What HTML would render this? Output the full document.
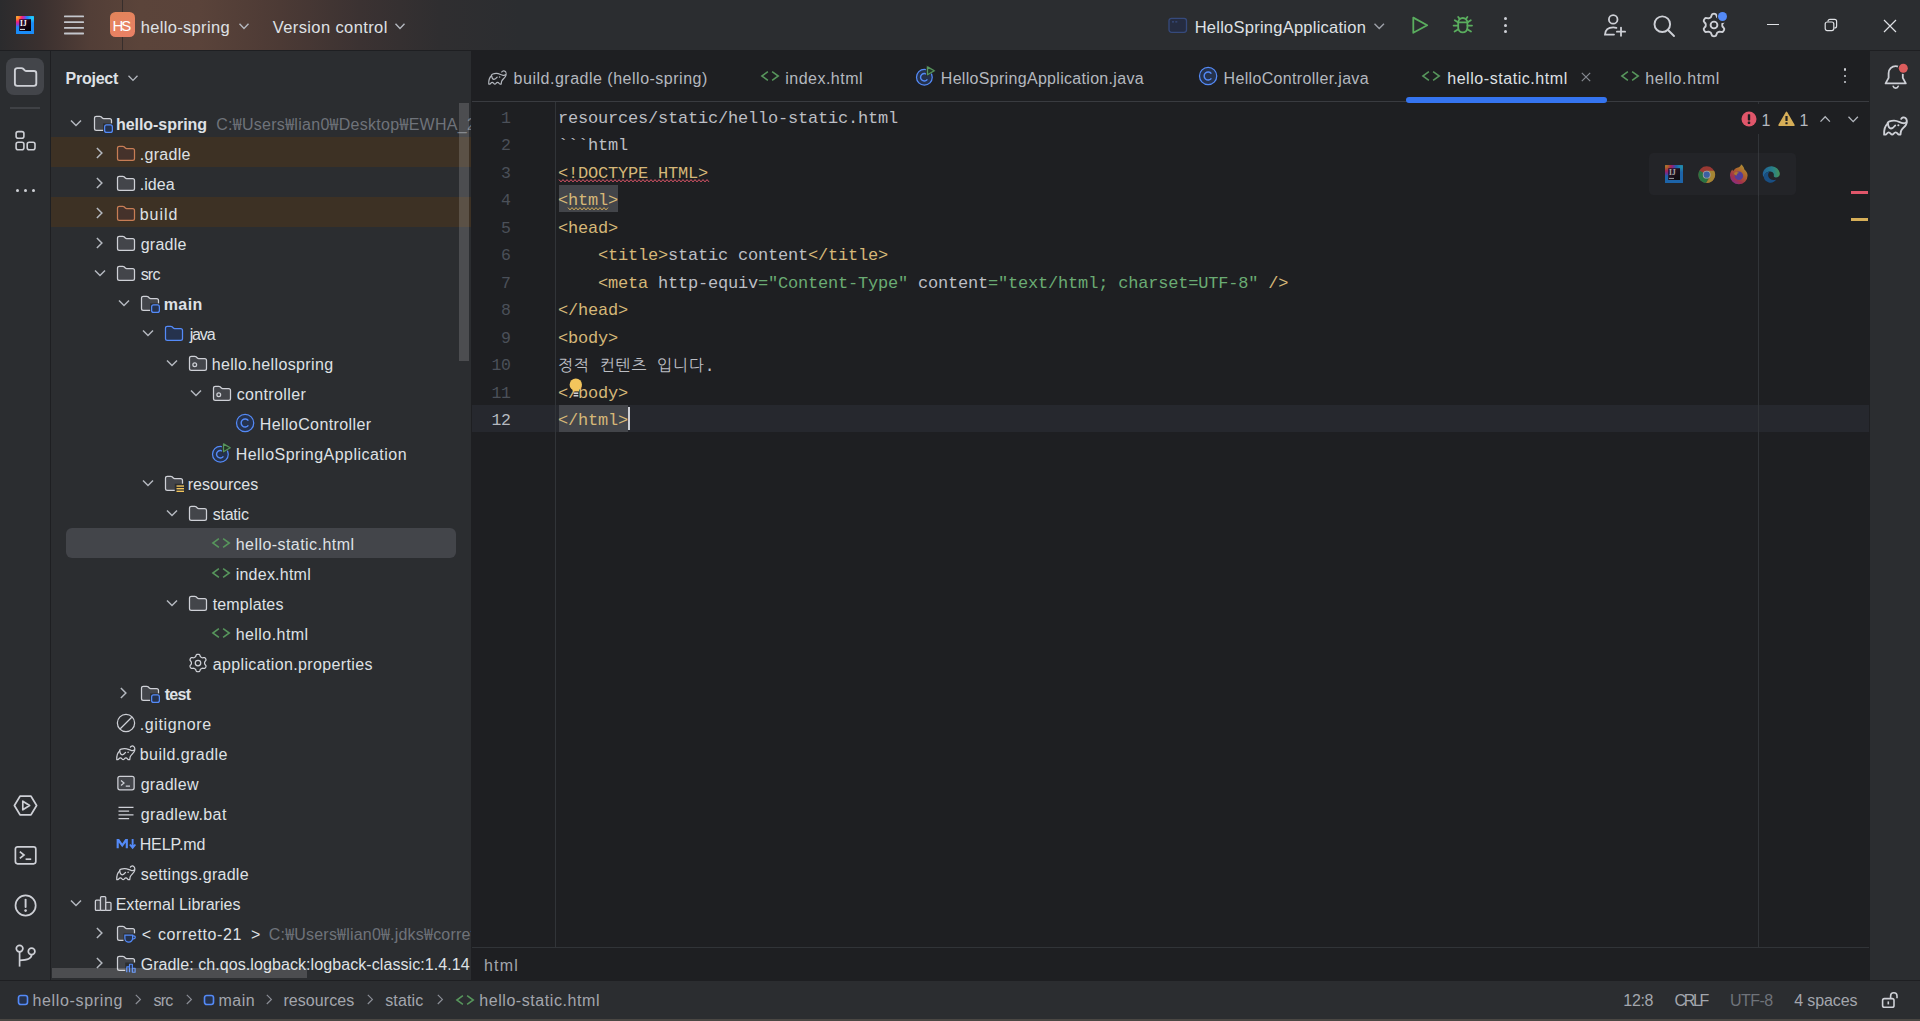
<!DOCTYPE html>
<html lang="ko"><head><meta charset="utf-8"><title>hello-spring – hello-static.html</title>
<style>
*{margin:0;padding:0;box-sizing:border-box}
html,body{width:1920px;height:1021px;overflow:hidden;background:#2b2d30}
body{position:relative;font-family:"Liberation Sans","NanumGothic",sans-serif;color:#dfe1e5}
.r,.ic,.t,.ln,.cl{position:absolute}
.ic{overflow:visible}
.t{white-space:pre;line-height:20px;font-size:16px}
.ln,.cl{font-family:"Liberation Mono","NanumGothic",monospace;font-size:17px;letter-spacing:-0.2px;line-height:27.5px;height:27.5px;white-space:pre}
.ln{left:472px;width:38.3px;text-align:right;font-size:16.5px;letter-spacing:-.5px}
.cl{left:558px}
.won{font-family:"Noto Sans CJK KR","NanumGothic",sans-serif;line-height:0}
.ko{font-family:"NanumGothic","Noto Sans CJK KR",sans-serif;font-size:16px;letter-spacing:.76px}
#clipL{position:absolute;left:51px;top:51px;width:420px;height:929px;overflow:hidden}
#clipL>*{margin-left:-51px;margin-top:-51px}
</style></head><body>
<div class="r" style="left:0;top:0;width:1920px;height:50px;background:linear-gradient(90deg,#2b2b2d 0,#3a302f 40px,#523e37 90px,#5b443a 140px,#5a433a 200px,#4c3a35 280px,#3b3232 360px,#2f2e30 440px,#2b2d30 520px)"></div>
<div class="r" style="left:0;top:50px;width:1920px;height:1px;background:#1e1f22"></div>
<div class="r" style="left:122px;top:0;width:1px;height:50px;background:rgba(30,31,34,.55)"></div>
<svg class="ic" style="left:16px;top:16px" width="18" height="18" viewBox="0 0 18 18"><defs><radialGradient id="ijg" cx="1" cy="1" r="13" gradientUnits="userSpaceOnUse"><stop offset="0" stop-color="#ffb030"/><stop offset=".18" stop-color="#ff7a30"/><stop offset=".38" stop-color="#f5207a"/><stop offset=".62" stop-color="#8a3fe0"/><stop offset=".85" stop-color="#1a8cff" stop-opacity="0"/></radialGradient><radialGradient id="ijc" cx="16.4" cy="2" r="5" gradientUnits="userSpaceOnUse"><stop offset="0" stop-color="#22d4fd"/><stop offset="1" stop-color="#22d4fd" stop-opacity="0"/></radialGradient><linearGradient id="iji" x1="0" y1="0" x2="1" y2="1"><stop offset="0" stop-color="#3c0a34"/><stop offset=".6" stop-color="#12020f"/><stop offset="1" stop-color="#000"/></linearGradient></defs><rect width="18" height="18" rx=".6" fill="#1a8cf8"/><rect width="18" height="18" rx=".6" fill="url(#ijg)"/><rect width="18" height="18" rx=".6" fill="url(#ijc)"/><rect x="3.2" y="3.2" width="11.8" height="11.8" fill="url(#iji)"/><text x="3.9" y="9.7" font-family="Liberation Serif,serif" font-weight="700" font-size="7.4" fill="#fff" letter-spacing=".2">IJ</text><rect x="4" y="12.9" width="5" height="1" fill="#e8e8e8"/></svg>
<svg class="ic" style="left:64px;top:14px" width="20" height="22" viewBox="0 0 20 22"><rect x="0" y="1.4" width="20" height="1.9" rx=".6" fill="#c3c6cc"/><rect x="0" y="7.2" width="20" height="1.9" rx=".6" fill="#c3c6cc"/><rect x="0" y="12.9" width="20" height="1.9" rx=".6" fill="#c3c6cc"/><rect x="0" y="18.5" width="20" height="1.9" rx=".6" fill="#c3c6cc"/></svg>
<div class="r" style="left:110px;top:12px;width:25px;height:25px;border-radius:5.5px;background:linear-gradient(160deg,#e2855a,#ea8066)"></div>
<svg class="ic" style="left:238.5px;top:22.5px" width="10" height="6.5" viewBox="0 0 10 6.5"><path d="M.5 .8L5.0 5.5L9.5 .8" fill="none" stroke="#b4b8bf" stroke-width="1.4"/></svg>
<svg class="ic" style="left:395px;top:22.5px" width="10" height="6.5" viewBox="0 0 10 6.5"><path d="M.5 .8L5.0 5.5L9.5 .8" fill="none" stroke="#b4b8bf" stroke-width="1.4"/></svg>
<svg class="ic" style="left:1373.5px;top:23.3px" width="10.5" height="6.6" viewBox="0 0 10.5 6.6"><path d="M.5 .8L5.25 5.6L10.0 .8" fill="none" stroke="#9da0a8" stroke-width="1.4"/></svg>
<svg class="ic" style="left:1168px;top:17px" width="20" height="17" viewBox="0 0 20 17"><rect x="1" y="1.3" width="17.5" height="14" rx="2.5" fill="#252c41" stroke="#364a7c" stroke-width="1.3"/><rect x="4" y="4.2" width="2" height="1.3" fill="#364a7c"/><rect x="7.3" y="4.2" width="2" height="1.3" fill="#364a7c"/></svg>
<svg class="ic" style="left:1411px;top:15px" width="20" height="21" viewBox="0 0 20 21"><path d="M2.3 2.6L16.2 10.2L2.3 17.8Z" fill="none" stroke="#5aad5e" stroke-width="1.8" stroke-linejoin="round"/></svg>
<svg class="ic" style="left:1452px;top:14px" width="22" height="22" viewBox="0 0 22 22"><g fill="none" stroke="#5aad5e" stroke-width="1.8" stroke-linecap="round"><path d="M6.2 8.6a4.6 4.6 0 0 1 9.2 0v5.2a4.6 4.6 0 0 1-9.2 0Z"/><path d="M6.2 8.3h9.2"/><path d="M7.6 4.9L6.2 3M14 4.9L15.4 3"/><path d="M6 11.6H1.6M20 11.6H15.6M6.3 15.2L2.6 17.6M15.3 15.2L19 17.6M6.3 8.6L2.8 6.3M15.3 8.6L18.8 6.3"/></g></svg>
<div class="r" style="left:1503.5px;top:17.3px;width:3px;height:3px;border-radius:50%;background:#ced0d6"></div><div class="r" style="left:1503.5px;top:23.9px;width:3px;height:3px;border-radius:50%;background:#ced0d6"></div><div class="r" style="left:1503.5px;top:30.4px;width:3px;height:3px;border-radius:50%;background:#ced0d6"></div>
<svg class="ic" style="left:1602px;top:12px" width="26" height="26" viewBox="0 0 26 26"><g fill="none" stroke="#ced0d6" stroke-width="1.8" stroke-linecap="round"><circle cx="11.2" cy="7.4" r="4.3"/><path d="M12 22.6H3c.3-4.6 3.6-7.2 8.2-7.2c1.2 0 2.3.2 3.2.5"/><path d="M19 15.6v8.2M14.9 19.7h8.2"/></g></svg>
<svg class="ic" style="left:1652px;top:14px" width="24" height="24" viewBox="0 0 24 24"><g fill="none" stroke="#ced0d6" stroke-width="1.9" stroke-linecap="round"><circle cx="10.3" cy="10.2" r="7.8"/><path d="M16 16L22 22"/></g></svg>
<svg class="ic" style="left:1700.5px;top:12.4px" width="26" height="26" viewBox="0 0 16 16"><path d="M8.00 1.10L8.60 1.13L9.17 1.38L9.55 2.20L9.81 3.04L10.16 3.38L10.55 3.58L10.93 3.82L11.39 3.96L12.24 3.76L13.15 3.68L13.65 4.04L13.98 4.55L14.25 5.08L14.31 5.70L13.80 6.45L13.20 7.08L13.08 7.56L13.10 8.00L13.08 8.44L13.20 8.92L13.80 9.55L14.31 10.30L14.25 10.92L13.98 11.45L13.65 11.96L13.15 12.32L12.24 12.24L11.39 12.04L10.93 12.18L10.55 12.42L10.16 12.62L9.81 12.96L9.55 13.80L9.17 14.62L8.60 14.87L8.00 14.90L7.40 14.87L6.83 14.62L6.45 13.80L6.19 12.96L5.84 12.62L5.45 12.42L5.07 12.18L4.61 12.04L3.76 12.24L2.85 12.32L2.35 11.96L2.02 11.45L1.75 10.92L1.69 10.30L2.20 9.55L2.80 8.92L2.92 8.44L2.90 8.00L2.92 7.56L2.80 7.08L2.20 6.45L1.69 5.70L1.75 5.08L2.02 4.55L2.35 4.04L2.85 3.68L3.76 3.76L4.61 3.96L5.07 3.82L5.45 3.58L5.84 3.38L6.19 3.04L6.45 2.20L6.83 1.38L7.40 1.13L8.00 1.10Z" fill="none" stroke="#ced0d6" stroke-width="1.15" stroke-linejoin="round"/><circle cx="8" cy="8" r="2.1" fill="none" stroke="#ced0d6" stroke-width="1.15"/></svg>
<div class="r" style="left:1716.5px;top:11.5px;width:11px;height:11px;border-radius:50%;background:#2b2d30"></div><div class="r" style="left:1717.5px;top:12.4px;width:9px;height:9px;border-radius:50%;background:#548af7"></div>
<div class="r" style="left:1767px;top:24px;width:12px;height:1px;background:#dfe1e5"></div>
<svg class="ic" style="left:1824px;top:18px" width="14" height="14" viewBox="0 0 14 14"><g fill="none" stroke="#dfe1e5" stroke-width="1.2"><rect x="1.2" y="4" width="8.6" height="8.6" rx="2"/><path d="M4 3.6V3.3a2 2 0 0 1 2-2h4.6a2 2 0 0 1 2 2V8a2 2 0 0 1-2 2h-.4"/></g></svg>
<svg class="ic" style="left:1883px;top:18.5px" width="14" height="14" viewBox="0 0 14 14"><path d="M1 1L13 13M13 1L1 13" stroke="#dfe1e5" stroke-width="1.2"/></svg>
<div class="r" style="left:50px;top:51px;width:1px;height:929px;background:#1e1f22"></div>
<div class="r" style="left:6px;top:57.5px;width:38px;height:37.5px;border-radius:8px;background:#43454a"></div>
<svg class="ic" style="left:12.9px;top:64px" width="25.2" height="25.2" viewBox="0 0 16 16"><path d="M1.2 4.1a1.5 1.5 0 0 1 1.5-1.5h2.7a1.5 1.5 0 0 1 1.06.44l1.0 1.0a1.5 1.5 0 0 0 1.06.44H13.3a1.5 1.5 0 0 1 1.5 1.5V12.4a1.5 1.5 0 0 1-1.5 1.5H2.7a1.5 1.5 0 0 1-1.5-1.5Z" fill="none" stroke="#ced0d6" stroke-width="1.2"/></svg>
<div class="r" style="left:10px;top:107px;width:30px;height:2px;background:#3f4145"></div>
<svg class="ic" style="left:14px;top:129px" width="24" height="24" viewBox="0 0 24 24"><g fill="none" stroke="#ced0d6" stroke-width="1.6"><rect x="2.1" y="2.6" width="7.8" height="6.6" rx="2"/><rect x="2.1" y="13.2" width="7.8" height="7.6" rx="2"/><rect x="13.2" y="13.2" width="7.8" height="7.6" rx="2"/></g></svg>
<div class="r" style="left:15.7px;top:188.8px;width:3.4px;height:3.4px;border-radius:50%;background:#ced0d6"></div>
<div class="r" style="left:23.8px;top:188.8px;width:3.4px;height:3.4px;border-radius:50%;background:#ced0d6"></div>
<div class="r" style="left:32.0px;top:188.8px;width:3.4px;height:3.4px;border-radius:50%;background:#ced0d6"></div>
<svg class="ic" style="left:12px;top:793px" width="27" height="25" viewBox="0 0 27 25"><g fill="none" stroke="#ced0d6" stroke-width="1.7" stroke-linejoin="round"><path d="M8 3.2h11l5.6 9.3L19 21.8H8L2.4 12.5Z"/><path d="M10.8 8.2L17.6 12.5L10.8 16.8Z"/></g></svg>
<svg class="ic" style="left:13px;top:844px" width="26" height="23" viewBox="0 0 26 23"><g fill="none" stroke="#ced0d6" stroke-width="1.7"><rect x="2.4" y="2.8" width="20.4" height="17" rx="2.2"/><path d="M6.8 7.6L11 11L6.8 14.4"/><path d="M12.6 15.2h5.6"/></g></svg>
<svg class="ic" style="left:13px;top:893px" width="26" height="26" viewBox="0 0 26 26"><circle cx="12.6" cy="12.5" r="10.1" fill="none" stroke="#ced0d6" stroke-width="1.7"/><path d="M12.6 6.6v7.4" stroke="#ced0d6" stroke-width="1.9" stroke-linecap="round"/><circle cx="12.6" cy="17.6" r="1.3" fill="#ced0d6"/></svg>
<svg class="ic" style="left:13px;top:942px" width="26" height="27" viewBox="0 0 26 27"><g fill="none" stroke="#ced0d6" stroke-width="1.7"><circle cx="6.6" cy="6.6" r="3.3"/><circle cx="18.6" cy="9.4" r="3.3"/><path d="M6.6 9.9V24.6"/><path d="M18.6 12.7c0 3.6-3.4 5.4-12 5.6"/></g></svg>
<div id="clipL">
<svg class="ic" style="left:66px;top:113px" width="20" height="20" viewBox="0 0 16 16" ><path d="M4 6L8 10L12 6" fill="none" stroke="#b4b8bf" stroke-width="1.2"/></svg>
<svg class="ic" style="left:93.2px;top:113px" width="20" height="20" viewBox="0 0 16 16" ><path d="M1.2 4.1a1.5 1.5 0 0 1 1.5-1.5h2.7a1.5 1.5 0 0 1 1.06.44l1.0 1.0a1.5 1.5 0 0 0 1.06.44H13.3a1.5 1.5 0 0 1 1.5 1.5V12.4a1.5 1.5 0 0 1-1.5 1.5H2.7a1.5 1.5 0 0 1-1.5-1.5Z" fill="#43454a" stroke="#ced0d6"/><rect x="8.1" y="8.3" width="8" height="8" fill="#2b2d30"/><rect x="9.3" y="9.5" width="6.2" height="6" rx="1.6" fill="#25324d" stroke="#548af7"/></svg>
<div class="r" style="left:51px;top:137px;width:420px;height:30px;background:#3d3124"></div>
<svg class="ic" style="left:90px;top:143px" width="20" height="20" viewBox="0 0 16 16" ><path d="M5.5 4L9.5 8L5.5 12" fill="none" stroke="#b4b8bf" stroke-width="1.2"/></svg>
<svg class="ic" style="left:116px;top:143px" width="20" height="20" viewBox="0 0 16 16" ><path d="M1.2 4.1a1.5 1.5 0 0 1 1.5-1.5h2.7a1.5 1.5 0 0 1 1.06.44l1.0 1.0a1.5 1.5 0 0 0 1.06.44H13.3a1.5 1.5 0 0 1 1.5 1.5V12.4a1.5 1.5 0 0 1-1.5 1.5H2.7a1.5 1.5 0 0 1-1.5-1.5Z" fill="#45322b" stroke="#c77d55"/></svg>
<svg class="ic" style="left:90px;top:173px" width="20" height="20" viewBox="0 0 16 16" ><path d="M5.5 4L9.5 8L5.5 12" fill="none" stroke="#b4b8bf" stroke-width="1.2"/></svg>
<svg class="ic" style="left:116px;top:173px" width="20" height="20" viewBox="0 0 16 16" ><path d="M1.2 4.1a1.5 1.5 0 0 1 1.5-1.5h2.7a1.5 1.5 0 0 1 1.06.44l1.0 1.0a1.5 1.5 0 0 0 1.06.44H13.3a1.5 1.5 0 0 1 1.5 1.5V12.4a1.5 1.5 0 0 1-1.5 1.5H2.7a1.5 1.5 0 0 1-1.5-1.5Z" fill="#43454a" stroke="#ced0d6"/></svg>
<div class="r" style="left:51px;top:197px;width:420px;height:30px;background:#3d3124"></div>
<svg class="ic" style="left:90px;top:203px" width="20" height="20" viewBox="0 0 16 16" ><path d="M5.5 4L9.5 8L5.5 12" fill="none" stroke="#b4b8bf" stroke-width="1.2"/></svg>
<svg class="ic" style="left:116px;top:203px" width="20" height="20" viewBox="0 0 16 16" ><path d="M1.2 4.1a1.5 1.5 0 0 1 1.5-1.5h2.7a1.5 1.5 0 0 1 1.06.44l1.0 1.0a1.5 1.5 0 0 0 1.06.44H13.3a1.5 1.5 0 0 1 1.5 1.5V12.4a1.5 1.5 0 0 1-1.5 1.5H2.7a1.5 1.5 0 0 1-1.5-1.5Z" fill="#45322b" stroke="#c77d55"/></svg>
<svg class="ic" style="left:90px;top:233px" width="20" height="20" viewBox="0 0 16 16" ><path d="M5.5 4L9.5 8L5.5 12" fill="none" stroke="#b4b8bf" stroke-width="1.2"/></svg>
<svg class="ic" style="left:116px;top:233px" width="20" height="20" viewBox="0 0 16 16" ><path d="M1.2 4.1a1.5 1.5 0 0 1 1.5-1.5h2.7a1.5 1.5 0 0 1 1.06.44l1.0 1.0a1.5 1.5 0 0 0 1.06.44H13.3a1.5 1.5 0 0 1 1.5 1.5V12.4a1.5 1.5 0 0 1-1.5 1.5H2.7a1.5 1.5 0 0 1-1.5-1.5Z" fill="#43454a" stroke="#ced0d6"/></svg>
<svg class="ic" style="left:90px;top:263px" width="20" height="20" viewBox="0 0 16 16" ><path d="M4 6L8 10L12 6" fill="none" stroke="#b4b8bf" stroke-width="1.2"/></svg>
<svg class="ic" style="left:116px;top:263px" width="20" height="20" viewBox="0 0 16 16" ><path d="M1.2 4.1a1.5 1.5 0 0 1 1.5-1.5h2.7a1.5 1.5 0 0 1 1.06.44l1.0 1.0a1.5 1.5 0 0 0 1.06.44H13.3a1.5 1.5 0 0 1 1.5 1.5V12.4a1.5 1.5 0 0 1-1.5 1.5H2.7a1.5 1.5 0 0 1-1.5-1.5Z" fill="#43454a" stroke="#ced0d6"/></svg>
<svg class="ic" style="left:114px;top:293px" width="20" height="20" viewBox="0 0 16 16" ><path d="M4 6L8 10L12 6" fill="none" stroke="#b4b8bf" stroke-width="1.2"/></svg>
<svg class="ic" style="left:140px;top:293px" width="20" height="20" viewBox="0 0 16 16" ><path d="M1.2 4.1a1.5 1.5 0 0 1 1.5-1.5h2.7a1.5 1.5 0 0 1 1.06.44l1.0 1.0a1.5 1.5 0 0 0 1.06.44H13.3a1.5 1.5 0 0 1 1.5 1.5V12.4a1.5 1.5 0 0 1-1.5 1.5H2.7a1.5 1.5 0 0 1-1.5-1.5Z" fill="#43454a" stroke="#ced0d6"/><rect x="8.1" y="8.3" width="8" height="8" fill="#2b2d30"/><rect x="9.3" y="9.5" width="6.2" height="6" rx="1.6" fill="#25324d" stroke="#548af7"/></svg>
<svg class="ic" style="left:138px;top:323px" width="20" height="20" viewBox="0 0 16 16" ><path d="M4 6L8 10L12 6" fill="none" stroke="#b4b8bf" stroke-width="1.2"/></svg>
<svg class="ic" style="left:164px;top:323px" width="20" height="20" viewBox="0 0 16 16" ><path d="M1.2 4.1a1.5 1.5 0 0 1 1.5-1.5h2.7a1.5 1.5 0 0 1 1.06.44l1.0 1.0a1.5 1.5 0 0 0 1.06.44H13.3a1.5 1.5 0 0 1 1.5 1.5V12.4a1.5 1.5 0 0 1-1.5 1.5H2.7a1.5 1.5 0 0 1-1.5-1.5Z" fill="#25324d" stroke="#548af7"/></svg>
<svg class="ic" style="left:162px;top:353px" width="20" height="20" viewBox="0 0 16 16" ><path d="M4 6L8 10L12 6" fill="none" stroke="#b4b8bf" stroke-width="1.2"/></svg>
<svg class="ic" style="left:188px;top:353px" width="20" height="20" viewBox="0 0 16 16" ><path d="M1.2 4.1a1.5 1.5 0 0 1 1.5-1.5h2.7a1.5 1.5 0 0 1 1.06.44l1.0 1.0a1.5 1.5 0 0 0 1.06.44H13.3a1.5 1.5 0 0 1 1.5 1.5V12.4a1.5 1.5 0 0 1-1.5 1.5H2.7a1.5 1.5 0 0 1-1.5-1.5Z" fill="#43454a" stroke="#ced0d6"/><circle cx="5.4" cy="9.4" r="1.5" fill="none" stroke="#ced0d6"/></svg>
<svg class="ic" style="left:186px;top:383px" width="20" height="20" viewBox="0 0 16 16" ><path d="M4 6L8 10L12 6" fill="none" stroke="#b4b8bf" stroke-width="1.2"/></svg>
<svg class="ic" style="left:212px;top:383px" width="20" height="20" viewBox="0 0 16 16" ><path d="M1.2 4.1a1.5 1.5 0 0 1 1.5-1.5h2.7a1.5 1.5 0 0 1 1.06.44l1.0 1.0a1.5 1.5 0 0 0 1.06.44H13.3a1.5 1.5 0 0 1 1.5 1.5V12.4a1.5 1.5 0 0 1-1.5 1.5H2.7a1.5 1.5 0 0 1-1.5-1.5Z" fill="#43454a" stroke="#ced0d6"/><circle cx="5.4" cy="9.4" r="1.5" fill="none" stroke="#ced0d6"/></svg>
<svg class="ic" style="left:236px;top:413px" width="20" height="20" viewBox="0 0 16 16" ><circle cx="7.3" cy="8" r="6.9" fill="#25324d" stroke="#548af7"/><path d="M9.9 6.1A3.2 3.2 0 1 0 9.9 9.9" fill="none" stroke="#548af7" stroke-width="1.15"/></svg>
<svg class="ic" style="left:212px;top:443px" width="20" height="20" viewBox="0 0 16 16" ><circle cx="6.7" cy="9.0" r="6.3" fill="#25324d" stroke="#548af7"/><path d="M9.1 7.3A3.0 3.0 0 1 0 9.1 10.7" fill="none" stroke="#548af7" stroke-width="1.15"/><path d="M7.9 -0.9L16.2 3.8L7.9 8.6Z" fill="#2b2d30"/><path d="M9.2 0.7L14.6 3.8L9.2 7.0Z" fill="#253627" stroke="#57965c" stroke-linejoin="round"/></svg>
<svg class="ic" style="left:138px;top:473px" width="20" height="20" viewBox="0 0 16 16" ><path d="M4 6L8 10L12 6" fill="none" stroke="#b4b8bf" stroke-width="1.2"/></svg>
<svg class="ic" style="left:164px;top:473px" width="20" height="20" viewBox="0 0 16 16" ><path d="M1.2 4.1a1.5 1.5 0 0 1 1.5-1.5h2.7a1.5 1.5 0 0 1 1.06.44l1.0 1.0a1.5 1.5 0 0 0 1.06.44H13.3a1.5 1.5 0 0 1 1.5 1.5V12.4a1.5 1.5 0 0 1-1.5 1.5H2.7a1.5 1.5 0 0 1-1.5-1.5Z" fill="#43454a" stroke="#ced0d6"/><rect x="8.6" y="8.6" width="8" height="8" fill="#2b2d30"/><rect x="10" y="9.9" width="6" height="1.1" fill="#f2c55c"/><rect x="10" y="12.0" width="6" height="1.1" fill="#f2c55c"/><rect x="10" y="14.1" width="6" height="1.1" fill="#f2c55c"/></svg>
<svg class="ic" style="left:162px;top:503px" width="20" height="20" viewBox="0 0 16 16" ><path d="M4 6L8 10L12 6" fill="none" stroke="#b4b8bf" stroke-width="1.2"/></svg>
<svg class="ic" style="left:188px;top:503px" width="20" height="20" viewBox="0 0 16 16" ><path d="M1.2 4.1a1.5 1.5 0 0 1 1.5-1.5h2.7a1.5 1.5 0 0 1 1.06.44l1.0 1.0a1.5 1.5 0 0 0 1.06.44H13.3a1.5 1.5 0 0 1 1.5 1.5V12.4a1.5 1.5 0 0 1-1.5 1.5H2.7a1.5 1.5 0 0 1-1.5-1.5Z" fill="#43454a" stroke="#ced0d6"/></svg>
<div class="r" style="left:66px;top:527.5px;width:390px;height:30px;background:#43454a;border-radius:6px"></div>
<svg class="ic" style="left:212px;top:533px" width="20" height="20" viewBox="0 0 16 16" ><path d="M5.5 4.5L.7 8L5.5 11.5M8.9 4.5L13.8 8L8.9 11.5" fill="none" stroke="#57965c" stroke-width="1.25"/></svg>
<svg class="ic" style="left:212px;top:563px" width="20" height="20" viewBox="0 0 16 16" ><path d="M5.5 4.5L.7 8L5.5 11.5M8.9 4.5L13.8 8L8.9 11.5" fill="none" stroke="#57965c" stroke-width="1.25"/></svg>
<svg class="ic" style="left:162px;top:593px" width="20" height="20" viewBox="0 0 16 16" ><path d="M4 6L8 10L12 6" fill="none" stroke="#b4b8bf" stroke-width="1.2"/></svg>
<svg class="ic" style="left:188px;top:593px" width="20" height="20" viewBox="0 0 16 16" ><path d="M1.2 4.1a1.5 1.5 0 0 1 1.5-1.5h2.7a1.5 1.5 0 0 1 1.06.44l1.0 1.0a1.5 1.5 0 0 0 1.06.44H13.3a1.5 1.5 0 0 1 1.5 1.5V12.4a1.5 1.5 0 0 1-1.5 1.5H2.7a1.5 1.5 0 0 1-1.5-1.5Z" fill="#43454a" stroke="#ced0d6"/></svg>
<svg class="ic" style="left:212px;top:623px" width="20" height="20" viewBox="0 0 16 16" ><path d="M5.5 4.5L.7 8L5.5 11.5M8.9 4.5L13.8 8L8.9 11.5" fill="none" stroke="#57965c" stroke-width="1.25"/></svg>
<svg class="ic" style="left:188px;top:653px" width="20" height="20" viewBox="0 0 16 16" ><path d="M8.00 1.00L8.61 1.03L9.19 1.27L9.59 2.06L9.87 2.86L10.24 3.20L10.65 3.41L11.04 3.66L11.52 3.81L12.35 3.65L13.23 3.61L13.73 3.98L14.06 4.50L14.34 5.04L14.42 5.66L13.94 6.41L13.39 7.05L13.28 7.54L13.30 8.00L13.28 8.46L13.39 8.95L13.94 9.59L14.42 10.34L14.34 10.96L14.06 11.50L13.73 12.02L13.23 12.39L12.35 12.35L11.52 12.19L11.04 12.34L10.65 12.59L10.24 12.80L9.87 13.14L9.59 13.94L9.19 14.73L8.61 14.97L8.00 15.00L7.39 14.97L6.81 14.73L6.41 13.94L6.13 13.14L5.76 12.80L5.35 12.59L4.96 12.34L4.48 12.19L3.65 12.35L2.77 12.39L2.27 12.02L1.94 11.50L1.66 10.96L1.58 10.34L2.06 9.59L2.61 8.95L2.72 8.46L2.70 8.00L2.72 7.54L2.61 7.05L2.06 6.41L1.58 5.66L1.66 5.04L1.94 4.50L2.27 3.98L2.77 3.61L3.65 3.65L4.48 3.81L4.96 3.66L5.35 3.41L5.76 3.20L6.13 2.86L6.41 2.06L6.81 1.27L7.39 1.03L8.00 1.00Z" fill="none" stroke="#ced0d6" stroke-linejoin="round"/><circle cx="8" cy="8" r="2.2" fill="none" stroke="#ced0d6"/></svg>
<svg class="ic" style="left:114px;top:683px" width="20" height="20" viewBox="0 0 16 16" ><path d="M5.5 4L9.5 8L5.5 12" fill="none" stroke="#b4b8bf" stroke-width="1.2"/></svg>
<svg class="ic" style="left:140px;top:683px" width="20" height="20" viewBox="0 0 16 16" ><path d="M1.2 4.1a1.5 1.5 0 0 1 1.5-1.5h2.7a1.5 1.5 0 0 1 1.06.44l1.0 1.0a1.5 1.5 0 0 0 1.06.44H13.3a1.5 1.5 0 0 1 1.5 1.5V12.4a1.5 1.5 0 0 1-1.5 1.5H2.7a1.5 1.5 0 0 1-1.5-1.5Z" fill="#43454a" stroke="#ced0d6"/><rect x="8.1" y="8.3" width="8" height="8" fill="#2b2d30"/><rect x="9.3" y="9.5" width="6.2" height="6" rx="1.6" fill="#25324d" stroke="#548af7"/></svg>
<svg class="ic" style="left:116px;top:713px" width="20" height="20" viewBox="0 0 16 16" ><circle cx="8" cy="8" r="6.9" fill="none" stroke="#ced0d6"/><path d="M3.4 12.6L12.6 3.4" stroke="#ced0d6"/></svg>
<svg class="ic" style="left:116.20px;top:745.40px" width="19.81" height="15.36" viewBox="199.2 235.2 721.5 559.5"><g fill="none" stroke="#ced0d6" stroke-width="45.5" stroke-linecap="round" stroke-linejoin="round"><path d="M330 452C318 400 420 362 520 365C620 368 690 420 770 436C810 443 845 436 866 414"/><path d="M722 314C740 275 800 256 845 286C896 322 896 420 860 482C820 550 750 592 722 652C705 690 706 740 700 770L650 770C628 770 612 706 560 706C510 706 500 770 460 770C420 770 410 706 360 706C310 706 300 770 270 770L228 770C220 640 250 520 330 452"/><path d="M335 452C345 522 372 592 425 592C470 592 520 542 548 506"/></g><circle cx="640" cy="500" r="30" fill="#ced0d6"/></svg>
<svg class="ic" style="left:116px;top:773px" width="20" height="20" viewBox="0 0 16 16" ><rect x="1.5" y="2.6" width="13" height="10.8" rx="1.6" fill="#43454a" stroke="#ced0d6"/><path d="M4 6L6.4 8L4 10" fill="none" stroke="#ced0d6"/><path d="M7.8 10.5h3.4" stroke="#ced0d6"/></svg>
<svg class="ic" style="left:116px;top:803px" width="20" height="20" viewBox="0 0 16 16" ><path d="M2 3.5h12M2 6.5h8.5M2 9.5h12M2 12.5h8.5" stroke="#ced0d6"/></svg>
<svg class="ic" style="left:116px;top:833px" width="20" height="20" viewBox="0 0 16 16" ><path d="M.5 12.2V4.8H2.5L5 8.4L7.5 4.8H9.5V12.2H7.8V7.6L5 11.4L2.2 7.6V12.2Z" fill="#548af7"/><path d="M13.3 4.8V11.2M11.1 9.2L13.3 11.8L15.5 9.2" fill="none" stroke="#548af7" stroke-width="1.5"/></svg>
<svg class="ic" style="left:116.20px;top:865.40px" width="19.81" height="15.36" viewBox="199.2 235.2 721.5 559.5"><g fill="none" stroke="#ced0d6" stroke-width="45.5" stroke-linecap="round" stroke-linejoin="round"><path d="M330 452C318 400 420 362 520 365C620 368 690 420 770 436C810 443 845 436 866 414"/><path d="M722 314C740 275 800 256 845 286C896 322 896 420 860 482C820 550 750 592 722 652C705 690 706 740 700 770L650 770C628 770 612 706 560 706C510 706 500 770 460 770C420 770 410 706 360 706C310 706 300 770 270 770L228 770C220 640 250 520 330 452"/><path d="M335 452C345 522 372 592 425 592C470 592 520 542 548 506"/></g><circle cx="640" cy="500" r="30" fill="#ced0d6"/></svg>
<svg class="ic" style="left:66px;top:893px" width="20" height="20" viewBox="0 0 16 16" ><path d="M4 6L8 10L12 6" fill="none" stroke="#b4b8bf" stroke-width="1.2"/></svg>
<svg class="ic" style="left:92px;top:893px" width="20" height="20" viewBox="0 0 16 16" ><g fill="#43454a" stroke="#ced0d6" stroke-linejoin="round"><rect x="2.7" y="5.7" width="4.1" height="8.2" rx=".8"/><rect x="6.8" y="2.9" width="4.2" height="11" rx=".8"/><rect x="11" y="7.4" width="4.2" height="6.5" rx=".8"/></g></svg>
<svg class="ic" style="left:90px;top:923px" width="20" height="20" viewBox="0 0 16 16" ><path d="M5.5 4L9.5 8L5.5 12" fill="none" stroke="#b4b8bf" stroke-width="1.2"/></svg>
<svg class="ic" style="left:116px;top:923px" width="20" height="20" viewBox="0 0 16 16" ><path d="M1.2 4.1a1.5 1.5 0 0 1 1.5-1.5h2.7a1.5 1.5 0 0 1 1.06.44l1.0 1.0a1.5 1.5 0 0 0 1.06.44H13.3a1.5 1.5 0 0 1 1.5 1.5V12.4a1.5 1.5 0 0 1-1.5 1.5H2.7a1.5 1.5 0 0 1-1.5-1.5Z" fill="#43454a" stroke="#ced0d6"/><rect x="6" y="8.3" width="10" height="8" fill="#2b2d30"/><path d="M7.1 9.6h6.2v2.6a3.1 3.1 0 0 1-6.2 0Z" fill="#25324d" stroke="#548af7"/><path d="M13.3 10.2h.9a1.2 1.2 0 0 1 0 2.4h-.9" fill="none" stroke="#548af7"/></svg>
<svg class="ic" style="left:90px;top:953px" width="20" height="20" viewBox="0 0 16 16" ><path d="M5.5 4L9.5 8L5.5 12" fill="none" stroke="#b4b8bf" stroke-width="1.2"/></svg>
<svg class="ic" style="left:116px;top:953px" width="20" height="20" viewBox="0 0 16 16" ><path d="M1.2 4.1a1.5 1.5 0 0 1 1.5-1.5h2.7a1.5 1.5 0 0 1 1.06.44l1.0 1.0a1.5 1.5 0 0 0 1.06.44H13.3a1.5 1.5 0 0 1 1.5 1.5V12.4a1.5 1.5 0 0 1-1.5 1.5H2.7a1.5 1.5 0 0 1-1.5-1.5Z" fill="#43454a" stroke="#ced0d6"/><rect x="7.4" y="7.6" width="9" height="9" fill="#2b2d30"/><path d="M8.6 15.4v-4.3h2.2v4.3M10.8 15.4V9.0h2.3v6.4M13.1 15.4v-3.2h2.2v3.2Z" fill="#25324d" stroke="#548af7" stroke-width=".9" stroke-linejoin="round"/></svg>
<span class="t" style="left:115.90px;top:115.06px;font-size:16px;color:#dfe1e5;letter-spacing:-0.035px;font-weight:700;">hello-spring</span>
<span class="t" style="left:139.70px;top:145.06px;font-size:16px;color:#dfe1e5;letter-spacing:0.313px;">.gradle</span>
<span class="t" style="left:139.70px;top:175.06px;font-size:16px;color:#dfe1e5;letter-spacing:0.076px;">.idea</span>
<span class="t" style="left:139.70px;top:205.06px;font-size:16px;color:#dfe1e5;letter-spacing:0.998px;">build</span>
<span class="t" style="left:140.70px;top:235.06px;font-size:16px;color:#dfe1e5;letter-spacing:0.264px;">gradle</span>
<span class="t" style="left:140.70px;top:265.06px;font-size:16px;color:#dfe1e5;letter-spacing:-0.814px;">src</span>
<span class="t" style="left:163.70px;top:295.06px;font-size:16px;color:#dfe1e5;letter-spacing:0.443px;font-weight:700;">main</span>
<span class="t" style="left:189.70px;top:325.06px;font-size:16px;color:#dfe1e5;letter-spacing:-1.151px;">java</span>
<span class="t" style="left:211.70px;top:355.06px;font-size:16px;color:#dfe1e5;letter-spacing:0.360px;">hello.hellospring</span>
<span class="t" style="left:236.70px;top:385.06px;font-size:16px;color:#dfe1e5;letter-spacing:0.358px;">controller</span>
<span class="t" style="left:259.70px;top:415.06px;font-size:16px;color:#dfe1e5;letter-spacing:0.401px;">HelloController</span>
<span class="t" style="left:235.70px;top:445.06px;font-size:16px;color:#dfe1e5;letter-spacing:0.472px;">HelloSpringApplication</span>
<span class="t" style="left:187.70px;top:475.06px;font-size:16px;color:#dfe1e5;letter-spacing:0.044px;">resources</span>
<span class="t" style="left:212.70px;top:505.06px;font-size:16px;color:#dfe1e5;letter-spacing:-0.229px;">static</span>
<span class="t" style="left:235.70px;top:535.06px;font-size:16px;color:#dfe1e5;letter-spacing:0.450px;">hello-static.html</span>
<span class="t" style="left:235.70px;top:565.06px;font-size:16px;color:#dfe1e5;letter-spacing:0.237px;">index.html</span>
<span class="t" style="left:212.70px;top:595.06px;font-size:16px;color:#dfe1e5;letter-spacing:0.167px;">templates</span>
<span class="t" style="left:235.70px;top:625.06px;font-size:16px;color:#dfe1e5;letter-spacing:0.442px;">hello.html</span>
<span class="t" style="left:212.70px;top:655.06px;font-size:16px;color:#dfe1e5;letter-spacing:0.367px;">application.properties</span>
<span class="t" style="left:164.70px;top:685.06px;font-size:16px;color:#dfe1e5;letter-spacing:-0.675px;font-weight:700;">test</span>
<span class="t" style="left:139.70px;top:715.06px;font-size:16px;color:#dfe1e5;letter-spacing:0.631px;">.gitignore</span>
<span class="t" style="left:139.70px;top:745.06px;font-size:16px;color:#dfe1e5;letter-spacing:0.461px;">build.gradle</span>
<span class="t" style="left:140.70px;top:775.06px;font-size:16px;color:#dfe1e5;letter-spacing:0.287px;">gradlew</span>
<span class="t" style="left:140.70px;top:805.06px;font-size:16px;color:#dfe1e5;letter-spacing:0.381px;">gradlew.bat</span>
<span class="t" style="left:139.70px;top:835.06px;font-size:16px;color:#dfe1e5;letter-spacing:-0.118px;">HELP.md</span>
<span class="t" style="left:140.70px;top:865.06px;font-size:16px;color:#dfe1e5;letter-spacing:0.274px;">settings.gradle</span>
<span class="t" style="left:115.70px;top:895.06px;font-size:16px;color:#dfe1e5;letter-spacing:0.012px;">External Libraries</span>
<span class="t" style="left:140.70px;top:955.06px;font-size:16px;color:#dfe1e5;letter-spacing:0.079px;">Gradle: ch.qos.logback:logback-classic:1.4.14</span>
<span class="t" style="left:141.80px;top:925.06px;font-size:16px;color:#dfe1e5;letter-spacing:0.000px;">&lt;</span>
<span class="t" style="left:158.00px;top:925.06px;font-size:16px;color:#dfe1e5;letter-spacing:0.603px;">corretto-21</span>
<span class="t" style="left:251.00px;top:925.06px;font-size:16px;color:#dfe1e5;letter-spacing:0.000px;">&gt;</span>
<span class="t" style="left:216.20px;top:115.06px;color:#6f737a;letter-spacing:0.287px">C:<span class="won">₩</span>Users<span class="won">₩</span>lian0<span class="won">₩</span>Desktop<span class="won">₩</span>EWHA_2</span>
<span class="t" style="left:268.80px;top:925.06px;color:#6f737a;letter-spacing:0.203px">C:<span class="won">₩</span>Users<span class="won">₩</span>lian0<span class="won">₩</span>.jdks<span class="won">₩</span>corretto-21</span>
<div class="r" style="left:459px;top:103px;width:10px;height:258px;background:rgba(255,255,255,.155)"></div>
<div class="r" style="left:52px;top:968px;width:255px;height:10px;background:rgba(255,255,255,.155)"></div>
</div>
<svg class="ic" style="left:127.7px;top:74.6px" width="10" height="6.4" viewBox="0 0 10 6.4"><path d="M.5 .8L5.0 5.4L9.5 .8" fill="none" stroke="#b4b8bf" stroke-width="1.3"/></svg>
<div class="r" style="left:471px;top:51px;width:1398px;height:929px;background:#1e1f22"></div>
<div class="r" style="left:1869px;top:51px;width:1px;height:929px;background:#1e1f22"></div>
<div class="r" style="left:472px;top:101px;width:1397px;height:1px;background:#393b40"></div>
<div class="r" style="left:472px;top:405px;width:1397px;height:27px;background:#26282e"></div>
<div class="r" style="left:555px;top:102px;width:1px;height:845px;background:#313438"></div>
<div class="r" style="left:1758px;top:102px;width:1px;height:845px;background:#313438"></div>
<div class="r" style="left:1735px;top:104px;width:134px;height:30px;background:#1e1f22"></div>
<div class="r" style="left:472px;top:946.5px;width:1397px;height:1px;background:#313438"></div>
<div class="r" style="left:1406px;top:97px;width:201px;height:5.5px;border-radius:3px;background:#3574f0"></div>
<div class="r" style="left:1843.65px;top:68.45px;width:2.7px;height:2.7px;border-radius:50%;background:#ced0d6"></div><div class="r" style="left:1843.65px;top:74.65px;width:2.7px;height:2.7px;border-radius:50%;background:#ced0d6"></div><div class="r" style="left:1843.65px;top:80.75px;width:2.7px;height:2.7px;border-radius:50%;background:#ced0d6"></div>
<svg class="ic" style="left:488.20px;top:69.50px" width="19.01" height="14.74" viewBox="199.2 235.2 721.5 559.5"><g fill="none" stroke="#b4b8bf" stroke-width="45.5" stroke-linecap="round" stroke-linejoin="round"><path d="M330 452C318 400 420 362 520 365C620 368 690 420 770 436C810 443 845 436 866 414"/><path d="M722 314C740 275 800 256 845 286C896 322 896 420 860 482C820 550 750 592 722 652C705 690 706 740 700 770L650 770C628 770 612 706 560 706C510 706 500 770 460 770C420 770 410 706 360 706C310 706 300 770 270 770L228 770C220 640 250 520 330 452"/><path d="M335 452C345 522 372 592 425 592C470 592 520 542 548 506"/></g><circle cx="640" cy="500" r="30" fill="#b4b8bf"/></svg>
<svg class="ic" style="left:761px;top:65.6px" width="20" height="20" viewBox="0 0 16 16" ><path d="M5.5 4.5L.7 8L5.5 11.5M8.9 4.5L13.8 8L8.9 11.5" fill="none" stroke="#57965c" stroke-width="1.25"/></svg>
<svg class="ic" style="left:1422px;top:65.6px" width="20" height="20" viewBox="0 0 16 16" ><path d="M5.5 4.5L.7 8L5.5 11.5M8.9 4.5L13.8 8L8.9 11.5" fill="none" stroke="#57965c" stroke-width="1.25"/></svg>
<svg class="ic" style="left:1620.7px;top:65.6px" width="20" height="20" viewBox="0 0 16 16" ><path d="M5.5 4.5L.7 8L5.5 11.5M8.9 4.5L13.8 8L8.9 11.5" fill="none" stroke="#57965c" stroke-width="1.25"/></svg>
<svg class="ic" style="left:916.2px;top:66px" width="20" height="20" viewBox="0 0 16 16" ><circle cx="6.7" cy="9.0" r="6.3" fill="#25324d" stroke="#548af7"/><path d="M9.1 7.3A3.0 3.0 0 1 0 9.1 10.7" fill="none" stroke="#548af7" stroke-width="1.15"/><path d="M7.9 -0.9L16.2 3.8L7.9 8.6Z" fill="#2b2d30"/><path d="M9.2 0.7L14.6 3.8L9.2 7.0Z" fill="#253627" stroke="#57965c" stroke-linejoin="round"/></svg>
<svg class="ic" style="left:1198.8px;top:66px" width="20" height="20" viewBox="0 0 16 16" ><circle cx="7.3" cy="8" r="6.9" fill="#25324d" stroke="#548af7"/><path d="M9.9 6.1A3.2 3.2 0 1 0 9.9 9.9" fill="none" stroke="#548af7" stroke-width="1.15"/></svg>
<svg class="ic" style="left:1580.5px;top:71.5px" width="10" height="10" viewBox="0 0 10 10"><path d="M.8 .8L9.2 9.2M9.2 .8L.8 9.2" stroke="#868a91" stroke-width="1.2"/></svg>
<div class="r" style="left:558.6px;top:185px;width:59.6px;height:27px;background:#43454a"></div>
<div class="r" style="left:558.6px;top:405px;width:69.4px;height:27px;background:#43454a"></div>
<div class="ln" style="top:104.50px;color:#4b5059">1</div>
<div class="cl" style="top:104.50px"><span style="color:#bcbec4">resources/static/hello-static.html</span></div>
<div class="ln" style="top:132.00px;color:#4b5059">2</div>
<div class="cl" style="top:132.00px"><span style="color:#bcbec4">```html</span></div>
<div class="ln" style="top:159.50px;color:#4b5059">3</div>
<div class="cl" style="top:159.50px"><span style="color:#d5b778">&lt;!DOCTYPE HTML&gt;</span></div>
<div class="ln" style="top:187.00px;color:#4b5059">4</div>
<div class="cl" style="top:187.00px"><span style="color:#d5b778">&lt;html&gt;</span></div>
<div class="ln" style="top:214.50px;color:#4b5059">5</div>
<div class="cl" style="top:214.50px"><span style="color:#d5b778">&lt;head&gt;</span></div>
<div class="ln" style="top:242.00px;color:#4b5059">6</div>
<div class="cl" style="top:242.00px">    <span style="color:#d5b778">&lt;title&gt;</span><span style="color:#bcbec4">static content</span><span style="color:#d5b778">&lt;/title&gt;</span></div>
<div class="ln" style="top:269.50px;color:#4b5059">7</div>
<div class="cl" style="top:269.50px">    <span style="color:#d5b778">&lt;meta</span><span style="color:#bcbec4"> http-equiv</span><span style="color:#6aab73">="Content-Type"</span><span style="color:#bcbec4"> content</span><span style="color:#6aab73">="text/html; charset=UTF-8"</span><span style="color:#d5b778"> /&gt;</span></div>
<div class="ln" style="top:297.00px;color:#4b5059">8</div>
<div class="cl" style="top:297.00px"><span style="color:#d5b778">&lt;/head&gt;</span></div>
<div class="ln" style="top:324.50px;color:#4b5059">9</div>
<div class="cl" style="top:324.50px"><span style="color:#d5b778">&lt;body&gt;</span></div>
<div class="ln" style="top:352.00px;color:#4b5059">10</div>
<div class="cl" style="top:352.00px"><span class="ko" style="color:#bcbec4">정적</span> <span class="ko" style="color:#bcbec4">컨텐츠</span> <span class="ko" style="color:#bcbec4">입니다</span><span style="color:#bcbec4">.</span></div>
<div class="ln" style="top:379.50px;color:#4b5059">11</div>
<div class="cl" style="top:379.50px"><span style="color:#d5b778">&lt;/body&gt;</span></div>
<div class="ln" style="top:407.00px;color:#b4b8bf">12</div>
<div class="cl" style="top:407.00px"><span style="color:#d5b778">&lt;/html&gt;</span></div>
<svg class="ic" style="left:558.5px;top:179.2px" width="151" height="4" viewBox="0 0 151 4"><polyline points="0.0,0.6 2.0,2.9 4.0,0.6 6.0,2.9 8.0,0.6 10.0,2.9 12.0,0.6 14.0,2.9 16.0,0.6 18.0,2.9 20.0,0.6 22.0,2.9 24.0,0.6 26.0,2.9 28.0,0.6 30.0,2.9 32.0,0.6 34.0,2.9 36.0,0.6 38.0,2.9 40.0,0.6 42.0,2.9 44.0,0.6 46.0,2.9 48.0,0.6 50.0,2.9 52.0,0.6 54.0,2.9 56.0,0.6 58.0,2.9 60.0,0.6 62.0,2.9 64.0,0.6 66.0,2.9 68.0,0.6 70.0,2.9 72.0,0.6 74.0,2.9 76.0,0.6 78.0,2.9 80.0,0.6 82.0,2.9 84.0,0.6 86.0,2.9 88.0,0.6 90.0,2.9 92.0,0.6 94.0,2.9 96.0,0.6 98.0,2.9 100.0,0.6 102.0,2.9 104.0,0.6 106.0,2.9 108.0,0.6 110.0,2.9 112.0,0.6 114.0,2.9 116.0,0.6 118.0,2.9 120.0,0.6 122.0,2.9 124.0,0.6 126.0,2.9 128.0,0.6 130.0,2.9 132.0,0.6 134.0,2.9 136.0,0.6 138.0,2.9 140.0,0.6 142.0,2.9 144.0,0.6 146.0,2.9 148.0,0.6 150.0,2.9" fill="none" stroke="#e0566a" stroke-width="1"/></svg>
<svg class="ic" style="left:568px;top:206.8px" width="41" height="4" viewBox="0 0 41 4"><polyline points="0.0,0.6 2.0,2.9 4.0,0.6 6.0,2.9 8.0,0.6 10.0,2.9 12.0,0.6 14.0,2.9 16.0,0.6 18.0,2.9 20.0,0.6 22.0,2.9 24.0,0.6 26.0,2.9 28.0,0.6 30.0,2.9 32.0,0.6 34.0,2.9 36.0,0.6 38.0,2.9 40.0,0.6" fill="none" stroke="#d6ae58" stroke-width="1"/></svg>
<div class="r" style="left:628px;top:406.7px;width:1.6px;height:23.6px;background:#ced0d6"></div>
<svg class="ic" style="left:568px;top:377px" width="16" height="22" viewBox="0 0 16 22"><circle cx="7.8" cy="7.7" r="6.2" fill="#f2c55c"/><path d="M4.6 11h6.4v3.4H4.6Z" fill="#f2c55c"/><rect x="5.6" y="15.4" width="4.7" height="1.6" fill="#ced0d6"/><rect x="5.6" y="17.9" width="4.7" height="1.6" fill="#ced0d6"/></svg>
<svg class="ic" style="left:1741px;top:111px" width="16" height="16" viewBox="0 0 16 16"><circle cx="8" cy="8" r="7.5" fill="#e0566a"/><rect x="6.8" y="3.2" width="2.4" height="6.2" rx=".6" fill="#1e1f22"/><rect x="6.8" y="10.6" width="2.4" height="2.4" rx=".6" fill="#1e1f22"/></svg>
<svg class="ic" style="left:1777.5px;top:110.5px" width="17" height="16" viewBox="0 0 17 16"><path d="M8.5 1.4L15.9 14.2H1.1Z" fill="#d6ae58" stroke="#d6ae58" stroke-width="1.6" stroke-linejoin="round"/><rect x="7.4" y="5" width="2.2" height="5" rx=".5" fill="#1e1f22"/><rect x="7.4" y="11.2" width="2.2" height="2.1" rx=".5" fill="#1e1f22"/></svg>
<svg class="ic" style="left:1820px;top:116px" width="10.4" height="6.6" viewBox="0 0 10.4 6.6"><path d="M.5 5.6L5.2 .8L9.9 5.6" fill="none" stroke="#b4b8bf" stroke-width="1.3"/></svg>
<svg class="ic" style="left:1847.8px;top:116px" width="10.4" height="6.6" viewBox="0 0 10.4 6.6"><path d="M.5 .8L5.2 5.6L9.9 .8" fill="none" stroke="#b4b8bf" stroke-width="1.3"/></svg>
<div class="r" style="left:1649px;top:152.5px;width:147px;height:42.5px;border-radius:4.5px;background:#232428"></div>
<div class="r" style="left:1758px;top:152.5px;width:1px;height:43px;background:#35373b"></div>
<svg class="ic" style="left:1665px;top:165px" width="18" height="18" viewBox="0 0 18 18" opacity=".62"><rect width="18" height="18" rx=".6" fill="#1a8cf8"/><rect width="18" height="18" rx=".6" fill="url(#ijg)"/><rect width="18" height="18" rx=".6" fill="url(#ijc)"/><rect x="3.2" y="3.2" width="11.8" height="11.8" fill="url(#iji)"/><text x="3.9" y="9.7" font-family="Liberation Serif,serif" font-weight="700" font-size="7.4" fill="#fff" letter-spacing=".2">IJ</text><rect x="4" y="12.9" width="5" height="1" fill="#e8e8e8"/></svg>
<svg class="ic" style="left:1697.8px;top:165.8px" width="17.4" height="17.4" viewBox="0 0 20 20" opacity=".66"><circle cx="10" cy="10" r="9.6" fill="#d7453a"/><path d="M10 10L1.7 5.2A9.6 9.6 0 0 0 9.4 19.6L13.6 12.2Z" fill="#2f9c50"/><path d="M10 10L13.9 12.3L9.4 19.6A9.6 9.6 0 0 0 18.6 5.6H10Z" fill="#e8b73a"/><circle cx="10" cy="10" r="4.5" fill="#e9e9ea"/><circle cx="10" cy="10" r="3.6" fill="#4a7fe0"/></svg>
<svg class="ic" style="left:1729.3px;top:163.6px" width="19.6" height="20.4" viewBox="0 0 21 22" opacity=".68"><defs><linearGradient id="ffg" x1=".8" y1=".1" x2=".2" y2="1"><stop offset="0" stop-color="#f0c03a"/><stop offset=".35" stop-color="#f08030"/><stop offset=".7" stop-color="#e03a5a"/><stop offset="1" stop-color="#b030c0"/></linearGradient></defs><path d="M10.6 3.6C12.4 2.6 12.9 1.2 12.8 .3C15.4 2.2 16.3 4.2 16.4 5.6C18.6 7.4 20 10 20 12.4A9.5 9.5 0 0 1 1 12.4C1 9.8 2 7.4 3.6 5.8C3.7 6.6 4 7.2 4.5 7.6C5.6 5.6 8 4 10.6 3.6Z" fill="url(#ffg)"/><circle cx="10.6" cy="12.6" r="4.6" fill="#6a4ad0"/><path d="M5.4 9.6C7 8.2 9.6 8.4 10.8 9.8C9 9.8 8 10.8 8.4 12.4C6.6 12.2 5.4 11.2 5.4 9.6Z" fill="#f0a030"/></svg>
<svg class="ic" style="left:1761.8px;top:164.8px" width="18.4" height="18.4" viewBox="0 0 20 20" opacity=".7"><defs><linearGradient id="edg" x1="0" y1="0" x2="1" y2="0"><stop offset="0" stop-color="#1f78c8"/><stop offset=".6" stop-color="#2aa8b0"/><stop offset="1" stop-color="#56c06a"/></linearGradient></defs><path d="M1 8.2A9.4 9.4 0 0 1 19.4 9.6C19.4 12.2 17.4 13.6 15.2 13.6C13.2 13.6 12.6 12.6 12.8 11.8C13.4 10.2 12.4 7 9 7C5 7 2 10 2 13.4C.8 11.8 .6 9.8 1 8.2Z" fill="url(#edg)"/><path d="M2 13.4C2 9.6 5.6 7.2 8.6 7.2C6.8 8.4 6.2 10.6 7 12.8C8 15.6 11.2 17.4 15.6 15.8C13.8 18.6 10.6 19.8 7.4 19C4.4 18.2 2.2 15.8 2 13.4Z" fill="#1660a8"/></svg>
<div class="r" style="left:1851px;top:191px;width:17px;height:3px;background:#e0566a"></div>
<div class="r" style="left:1851px;top:218.4px;width:17px;height:3px;background:#d6ae58"></div>
<svg class="ic" style="left:1883px;top:62px" width="26" height="28" viewBox="0 0 26 28"><g fill="none" stroke="#ced0d6" stroke-width="1.8" stroke-linejoin="round" stroke-linecap="round"><path d="M2.6 21.4L5.6 15.8V11.2a7.1 7.1 0 0 1 14.2 0v4.6l3 5.6Z"/><path d="M10.2 24.2a2.6 2.6 0 0 0 5 0" stroke-width="1.6"/></g><circle cx="20.3" cy="6.3" r="5.7" fill="#2b2d30"/><circle cx="20.3" cy="6.3" r="4.5" fill="#db5c5c"/></svg>
<svg class="ic" style="left:1882.90px;top:116.30px" width="25.24" height="19.65" viewBox="194.5 230.5 731.0 569.0"><g fill="none" stroke="#ced0d6" stroke-width="55.0" stroke-linecap="round" stroke-linejoin="round"><path d="M330 452C318 400 420 362 520 365C620 368 690 420 770 436C810 443 845 436 866 414"/><path d="M722 314C740 275 800 256 845 286C896 322 896 420 860 482C820 550 750 592 722 652C705 690 706 740 700 770L650 770C628 770 612 706 560 706C510 706 500 770 460 770C420 770 410 706 360 706C310 706 300 770 270 770L228 770C220 640 250 520 330 452"/><path d="M335 452C345 522 372 592 425 592C470 592 520 542 548 506"/></g><circle cx="640" cy="500" r="30" fill="#ced0d6"/></svg>
<div class="r" style="left:0;top:980px;width:1920px;height:1px;background:#1e1f22"></div>
<div class="r" style="left:0;top:1019px;width:1920px;height:2px;background:#4a4743"></div>
<svg class="ic" style="left:134.70000000000002px;top:994.3px" width="7" height="11" viewBox="0 0 7 11"><path d="M.8 .8L5.4 5.4L.8 10" fill="none" stroke="#8b8e96" stroke-width="1.2"/></svg>
<svg class="ic" style="left:186.10000000000002px;top:994.3px" width="7" height="11" viewBox="0 0 7 11"><path d="M.8 .8L5.4 5.4L.8 10" fill="none" stroke="#8b8e96" stroke-width="1.2"/></svg>
<svg class="ic" style="left:266.1px;top:994.3px" width="7" height="11" viewBox="0 0 7 11"><path d="M.8 .8L5.4 5.4L.8 10" fill="none" stroke="#8b8e96" stroke-width="1.2"/></svg>
<svg class="ic" style="left:367.1px;top:994.3px" width="7" height="11" viewBox="0 0 7 11"><path d="M.8 .8L5.4 5.4L.8 10" fill="none" stroke="#8b8e96" stroke-width="1.2"/></svg>
<svg class="ic" style="left:436.5px;top:994.3px" width="7" height="11" viewBox="0 0 7 11"><path d="M.8 .8L5.4 5.4L.8 10" fill="none" stroke="#8b8e96" stroke-width="1.2"/></svg>
<svg class="ic" style="left:13px;top:990px" width="20" height="20" viewBox="0 0 16 16" ><rect x="4.4" y="4.4" width="7.2" height="7.2" rx="1.8" fill="#25324d" stroke="#548af7" stroke-width="1.3"/></svg>
<svg class="ic" style="left:199px;top:990px" width="20" height="20" viewBox="0 0 16 16" ><rect x="4.4" y="4.4" width="7.2" height="7.2" rx="1.8" fill="#25324d" stroke="#548af7" stroke-width="1.3"/></svg>
<svg class="ic" style="left:455.6px;top:990px" width="20" height="20" viewBox="0 0 16 16" ><path d="M5.5 4.5L.7 8L5.5 11.5M8.9 4.5L13.8 8L8.9 11.5" fill="none" stroke="#57965c" stroke-width="1.25"/></svg>
<svg class="ic" style="left:1880px;top:990px" width="20" height="20" viewBox="0 0 20 20"><g fill="none" stroke="#ced0d6" stroke-width="1.6"><rect x="2.6" y="8.6" width="11.4" height="8.6" rx="1.8"/><path d="M10.6 8.4V6a3.2 3.2 0 0 1 6.4 0v2.2"/><path d="M8.3 11.4v3"/></g></svg>
<span class="t" style="left:112.60px;top:16.20px;font-size:15px;color:#ffffff;letter-spacing:-2.233px;">HS</span>
<span class="t" style="left:140.70px;top:17.08px;font-size:16.5px;color:#dfe1e5;letter-spacing:0.326px;">hello-spring</span>
<span class="t" style="left:272.70px;top:17.08px;font-size:16.5px;color:#dfe1e5;letter-spacing:0.394px;">Version control</span>
<span class="t" style="left:1194.70px;top:16.88px;font-size:16.5px;color:#dfe1e5;letter-spacing:0.246px;">HelloSpringApplication</span>
<span class="t" style="left:65.50px;top:68.86px;font-size:16px;color:#dfe1e5;letter-spacing:-0.236px;font-weight:700;">Project</span>
<span class="t" style="left:513.60px;top:68.66px;font-size:16px;color:#b4b8bf;letter-spacing:0.507px;">build.gradle (hello-spring)</span>
<span class="t" style="left:785.20px;top:68.66px;font-size:16px;color:#b4b8bf;letter-spacing:0.493px;">index.html</span>
<span class="t" style="left:940.80px;top:68.66px;font-size:16px;color:#b4b8bf;letter-spacing:0.308px;">HelloSpringApplication.java</span>
<span class="t" style="left:1223.60px;top:68.66px;font-size:16px;color:#b4b8bf;letter-spacing:0.330px;">HelloController.java</span>
<span class="t" style="left:1447.20px;top:68.66px;font-size:16px;color:#dfe1e5;letter-spacing:0.557px;">hello-static.html</span>
<span class="t" style="left:1645.20px;top:68.66px;font-size:16px;color:#b4b8bf;letter-spacing:0.620px;">hello.html</span>
<span class="t" style="left:1761.40px;top:111.06px;font-size:16px;color:#b4b8bf;letter-spacing:0.000px;">1</span>
<span class="t" style="left:1799.40px;top:111.06px;font-size:16px;color:#b4b8bf;letter-spacing:0.000px;">1</span>
<span class="t" style="left:484.00px;top:956.06px;font-size:16px;color:#a3a6ad;letter-spacing:1.209px;">html</span>
<span class="t" style="left:32.50px;top:990.66px;font-size:16px;color:#a3a6ad;letter-spacing:0.662px;">hello-spring</span>
<span class="t" style="left:153.40px;top:990.66px;font-size:16px;color:#a3a6ad;letter-spacing:-0.714px;">src</span>
<span class="t" style="left:218.40px;top:990.66px;font-size:16px;color:#a3a6ad;letter-spacing:0.540px;">main</span>
<span class="t" style="left:283.40px;top:990.66px;font-size:16px;color:#a3a6ad;letter-spacing:0.069px;">resources</span>
<span class="t" style="left:385.20px;top:990.66px;font-size:16px;color:#a3a6ad;letter-spacing:0.131px;">static</span>
<span class="t" style="left:479.20px;top:990.66px;font-size:16px;color:#a3a6ad;letter-spacing:0.575px;">hello-static.html</span>
<span class="t" style="left:1623.30px;top:990.66px;font-size:16px;color:#a3a6ad;letter-spacing:-0.314px;">12:8</span>
<span class="t" style="left:1674.60px;top:990.66px;font-size:16px;color:#a3a6ad;letter-spacing:-2.336px;">CRLF</span>
<span class="t" style="left:1729.90px;top:990.66px;font-size:16px;color:#6f737a;letter-spacing:-0.532px;">UTF-8</span>
<span class="t" style="left:1794.30px;top:990.66px;font-size:16px;color:#a3a6ad;letter-spacing:-0.134px;">4 spaces</span>
</body></html>
